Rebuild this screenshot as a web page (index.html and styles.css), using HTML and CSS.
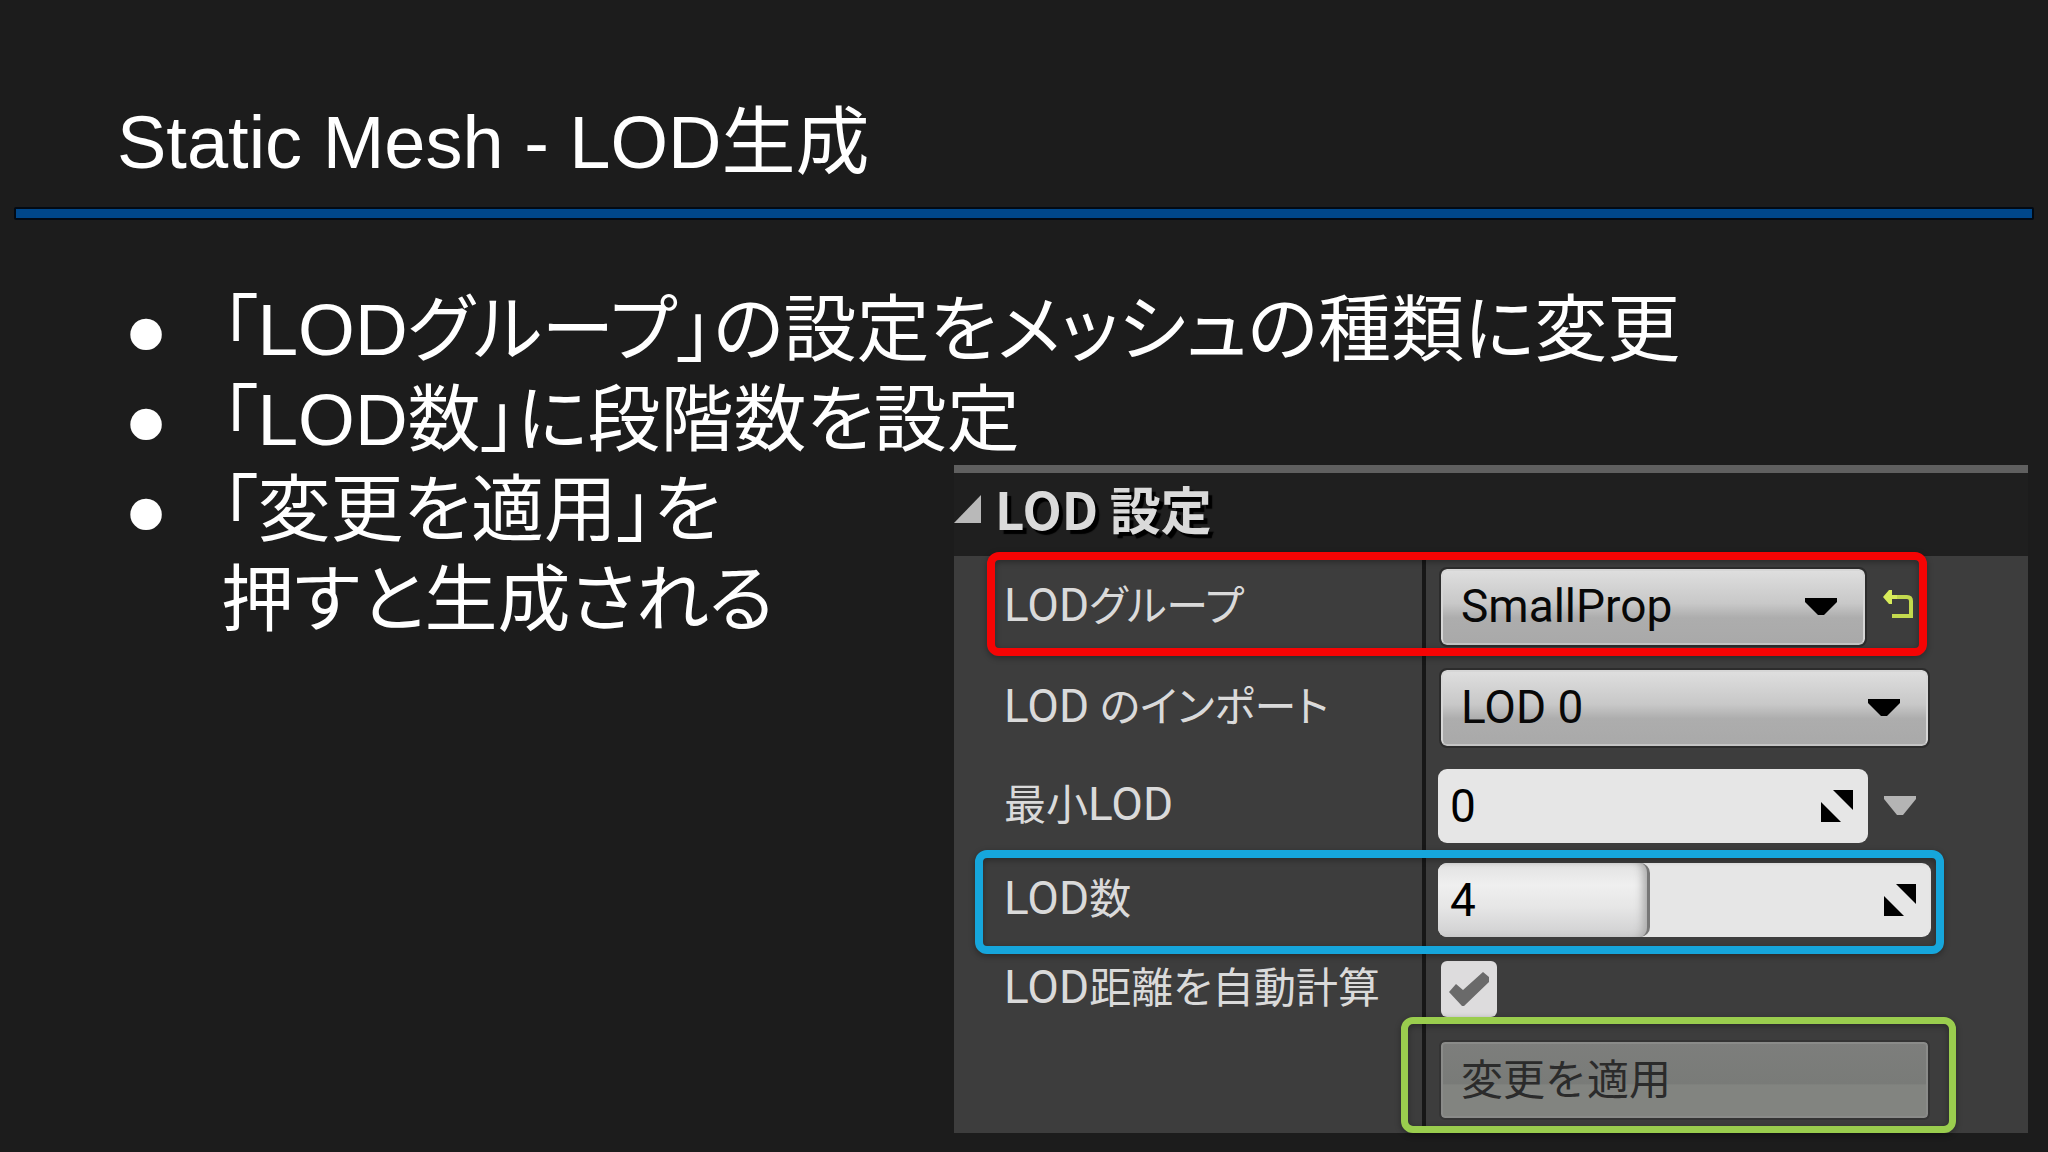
FILE: index.html
```html
<!DOCTYPE html>
<html lang="ja">
<head>
<meta charset="utf-8">
<title>Static Mesh - LOD生成</title>
<link rel="stylesheet" href="styles.css">
</head>
<body>
<main class="slide">
  <header class="slide-header">
    <h1 class="slide-title">Static Mesh - LOD生成</h1>
  </header>
  <div class="slide-rule"></div>
  <div class="slide-body">
    <ul class="bullets">
      <li class="bullet"><span>「LODグループ」の設定をメッシュの種類に変更</span></li>
      <li class="bullet"><span>「LOD数」に段階数を設定</span></li>
      <li class="bullet"><span>「変更を適用」を<br>押すと生成される</span></li>
    </ul>
    <section class="panel">
      <h2 class="panel-title">
        <svg class="expander" viewBox="0 0 27 28" aria-hidden="true"><path d="M27 0V28H0Z"/></svg>
        LOD 設定
      </h2>
      <div class="row row-tall">
        <label class="label" for="lod-group"><span class="latin">LOD</span>グループ</label>
        <div class="field">
          <div class="control">
            <select class="select" id="lod-group"><option>SmallProp</option></select>
            <svg class="caret" viewBox="0 0 32 18" aria-hidden="true"><path d="M0 0H32V4L19 17H13L0 4Z"/></svg>
          </div>
          <button class="side reset" type="button" aria-label="リセット">
            <svg viewBox="0 0 32 32" aria-hidden="true"><path class="reset-line" d="M8 8H24Q28 8 28 12V27H9"/><path class="reset-head" d="M0 8L6 1H9V6H14V10H9V15H6Z"/></svg>
          </button>
        </div>
        <div class="mark mark-red"></div>
      </div>
      <div class="row row-tall">
        <label class="label" for="lod-import"><span class="latin">LOD</span> のインポート</label>
        <div class="field">
          <div class="control">
            <select class="select" id="lod-import"><option>LOD 0</option></select>
            <svg class="caret" viewBox="0 0 32 18" aria-hidden="true"><path d="M0 0H32V4L19 17H13L0 4Z"/></svg>
          </div>
        </div>
      </div>
      <div class="row row-mid">
        <label class="label" for="lod-min">最小<span class="latin">LOD</span></label>
        <div class="field field-number">
          <div class="control number">
            <input class="input" id="lod-min" type="text" inputmode="numeric" value="0">
            <svg class="spin" viewBox="0 0 32 32" aria-hidden="true"><path d="M12 0H32V20ZM0 12V32H20Z"/></svg>
          </div>
          <button class="side more" type="button" aria-label="詳細">
            <svg viewBox="0 0 32 19" aria-hidden="true"><path d="M0 0H32V3L19 19H13L0 3Z"/></svg>
          </button>
        </div>
      </div>
      <div class="row row-mid">
        <label class="label" for="lod-count"><span class="latin">LOD</span>数</label>
        <div class="field field-number">
          <div class="control number">
            <div class="fill" style="width: 43%"></div>
            <input class="input" id="lod-count" type="text" inputmode="numeric" value="4">
            <svg class="spin" viewBox="0 0 32 32" aria-hidden="true"><path d="M12 0H32V20ZM0 12V32H20Z"/></svg>
          </div>
        </div>
        <div class="mark mark-blue"></div>
      </div>
      <div class="row row-short">
        <label class="label" for="lod-auto"><span class="latin">LOD</span>距離を自動計算</label>
        <div class="field">
          <div class="check">
            <input class="check-box" id="lod-auto" type="checkbox" checked>
            <svg class="check-tick" viewBox="0 0 40 34" aria-hidden="true"><path d="M0 20L7 12L14 18L34 0L40 5V10L15 34H13Z"/></svg>
          </div>
        </div>
      </div>
      <div class="row row-tall">
        <div class="label"></div>
        <div class="field field-apply">
          <button class="apply" type="button" disabled>変更を適用</button>
        </div>
        <div class="mark mark-green"></div>
      </div>
    </section>
  </div>
</main>
</body>
</html>
```
FILE: styles.css
```css
* {
  box-sizing: border-box;
}

body {
  margin: 0;
  background: #1c1c1c;
  color: #fff;
  font-family: "Liberation Sans", "Noto Sans CJK JP", sans-serif;
}

.slide {
  min-height: 100vh;
}

.slide-header {
  padding: 98px 117px 19px;
}

.slide-title {
  margin: 0;
  font-size: 74px;
  font-weight: 400;
  line-height: 90px;
}

.slide-rule {
  height: 13px;
  margin: 0 14px;
  border: 2px solid #020a14;
  border-radius: 2px;
  background: #00478a;
}

/* The list spans the whole body; the panel shares its lower right part. */
.slide-body {
  display: grid;
  grid-template-columns: minmax(0, 954fr) minmax(0, 1074fr);
  grid-template-rows: 245px auto;
  padding-right: 20px;
}

.bullets {
  grid-area: 1 / 1 / 3 / 3;
  margin: 0;
  padding: 65px 0 0 124px;
  list-style: none;
  font-size: 73px;
  line-height: 90px;
  font-feature-settings: "palt";
}

.bullet {
  display: grid;
  grid-template-columns: 97px 1fr;
}

.bullet::before {
  content: "●";
}

.panel {
  grid-area: 2 / 2;
  align-self: start;
  border-top: 8px solid #5f5f5f;
  background: #3d3d3d;
  color: #dadada;
  font-family: Roboto, "Noto Sans CJK JP", sans-serif;
  font-size: 42px;
}

.panel-title {
  display: flex;
  align-items: center;
  gap: 14px;
  height: 83px;
  margin: 0;
  padding-bottom: 12px;
  background: #1f1f1f;
  font-family: "Noto Sans CJK JP", sans-serif;
  font-size: 51px;
  font-weight: 700;
  line-height: 71px;
  text-shadow: 4px 4px 1px #000;
}

.expander {
  width: 27px;
  height: 28px;
  fill: #b9b9b9;
}

.row {
  position: relative;
  display: grid;
  grid-template-columns: 472px minmax(0, 1fr);
}

.row-tall {
  height: 101px;
  line-height: 101px;
}

.row-mid {
  height: 94px;
  line-height: 96px;
}

.row-short {
  height: 86px;
  line-height: 86px;
}

.label {
  padding-left: 50px;
  border-right: 4px solid #171717;
  white-space: pre;
  font-feature-settings: "palt";
}

.latin {
  font-size: 46px;
  line-height: 1;
}

.field {
  display: flex;
  align-items: center;
  padding: 0 100px 0 15px;
}

.field-number {
  padding: 0 97px 0 12px;
}

.field-apply {
  padding-bottom: 6px;
}

.control {
  position: relative;
  flex: 1;
  height: 76px;
}

.select {
  display: block;
  width: 100%;
  height: 76px;
  padding: 0 18px 2px;
  appearance: none;
  border: 2px solid #d6d6d6;
  border-bottom-color: #c4c4c4;
  border-radius: 6px;
  outline: 2px solid #2c2c2c;
  background: linear-gradient(#dedede, #c8c8c8 45%, #adadad 65%, #a9a9a9);
  color: #080808;
  font: 46px Roboto, sans-serif;
}

.caret {
  position: absolute;
  top: 29px;
  right: 28px;
  width: 32px;
  height: 18px;
  pointer-events: none;
}

.side {
  display: flex;
  justify-content: flex-end;
  width: 63px;
  padding: 0 15px 0 0;
  border: 0;
  background: none;
}

.side svg {
  width: 32px;
}

.reset {
  padding: 0 13px 4px 0;
}

.reset-line {
  fill: none;
  stroke: #c3d94e;
  stroke-width: 4;
}

.reset-head {
  fill: #d8ec5a;
}

.more {
  padding-bottom: 2px;
  fill: #b4b4b4;
}

.number {
  height: 74px;
  overflow: hidden;
  border-radius: 9px;
  background: #e6e6e6;
}

.fill {
  position: absolute;
  inset: 0 auto 0 0;
  border-right: 3px solid #777;
  border-radius: 0 10px 10px 0;
  background: linear-gradient(#e2e2e2, #efefef 30%, #e6e6e6 60%, #cfcfd0);
  box-shadow: inset -8px 0 8px -4px #aaa;
}

.input {
  position: relative;
  display: block;
  width: 100%;
  height: 74px;
  padding: 0 12px;
  border: 0;
  background: none;
  color: #000;
  font: 46px Roboto, sans-serif;
}

.spin {
  position: absolute;
  top: 21px;
  right: 15px;
  width: 32px;
  height: 32px;
}

.check {
  display: grid;
  place-items: center;
}

.check-box {
  grid-area: 1 / 1;
  width: 56px;
  height: 56px;
  margin: 0;
  appearance: none;
  border-radius: 6px;
  background: #dddcdd;
}

.check-tick {
  grid-area: 1 / 1;
  width: 40px;
  height: 34px;
  fill: #6a6a6a;
  pointer-events: none;
}

.apply {
  width: 100%;
  height: 76px;
  padding: 0 18px 6px;
  border: 2px solid #8a8b89;
  border-radius: 4px;
  outline: 2px solid #343434;
  background: linear-gradient(#7d7e7c, #797b78 55%, #828480 57%, #828480);
  color: #2b2b2b;
  font: 42px/66px "Noto Sans CJK JP", sans-serif;
  text-align: left;
}

/* Coloured frames drawn over the rows the slide talks about. */
.mark {
  position: absolute;
  z-index: 1;
  border: 8px solid;
  border-radius: 12px;
  box-shadow: 0 2px 6px #0005, inset 0 2px 6px #0005;
  pointer-events: none;
}

.mark-red {
  inset: -4px 101px 1px 33px;
  border-color: #f60404;
}

.mark-blue {
  inset: -2px 84px -8px 21px;
  border-color: #16a6dc;
}

.mark-green {
  inset: -15px 72px 0 447px;
  border-width: 7px;
  border-color: #9acd4e;
}
```
